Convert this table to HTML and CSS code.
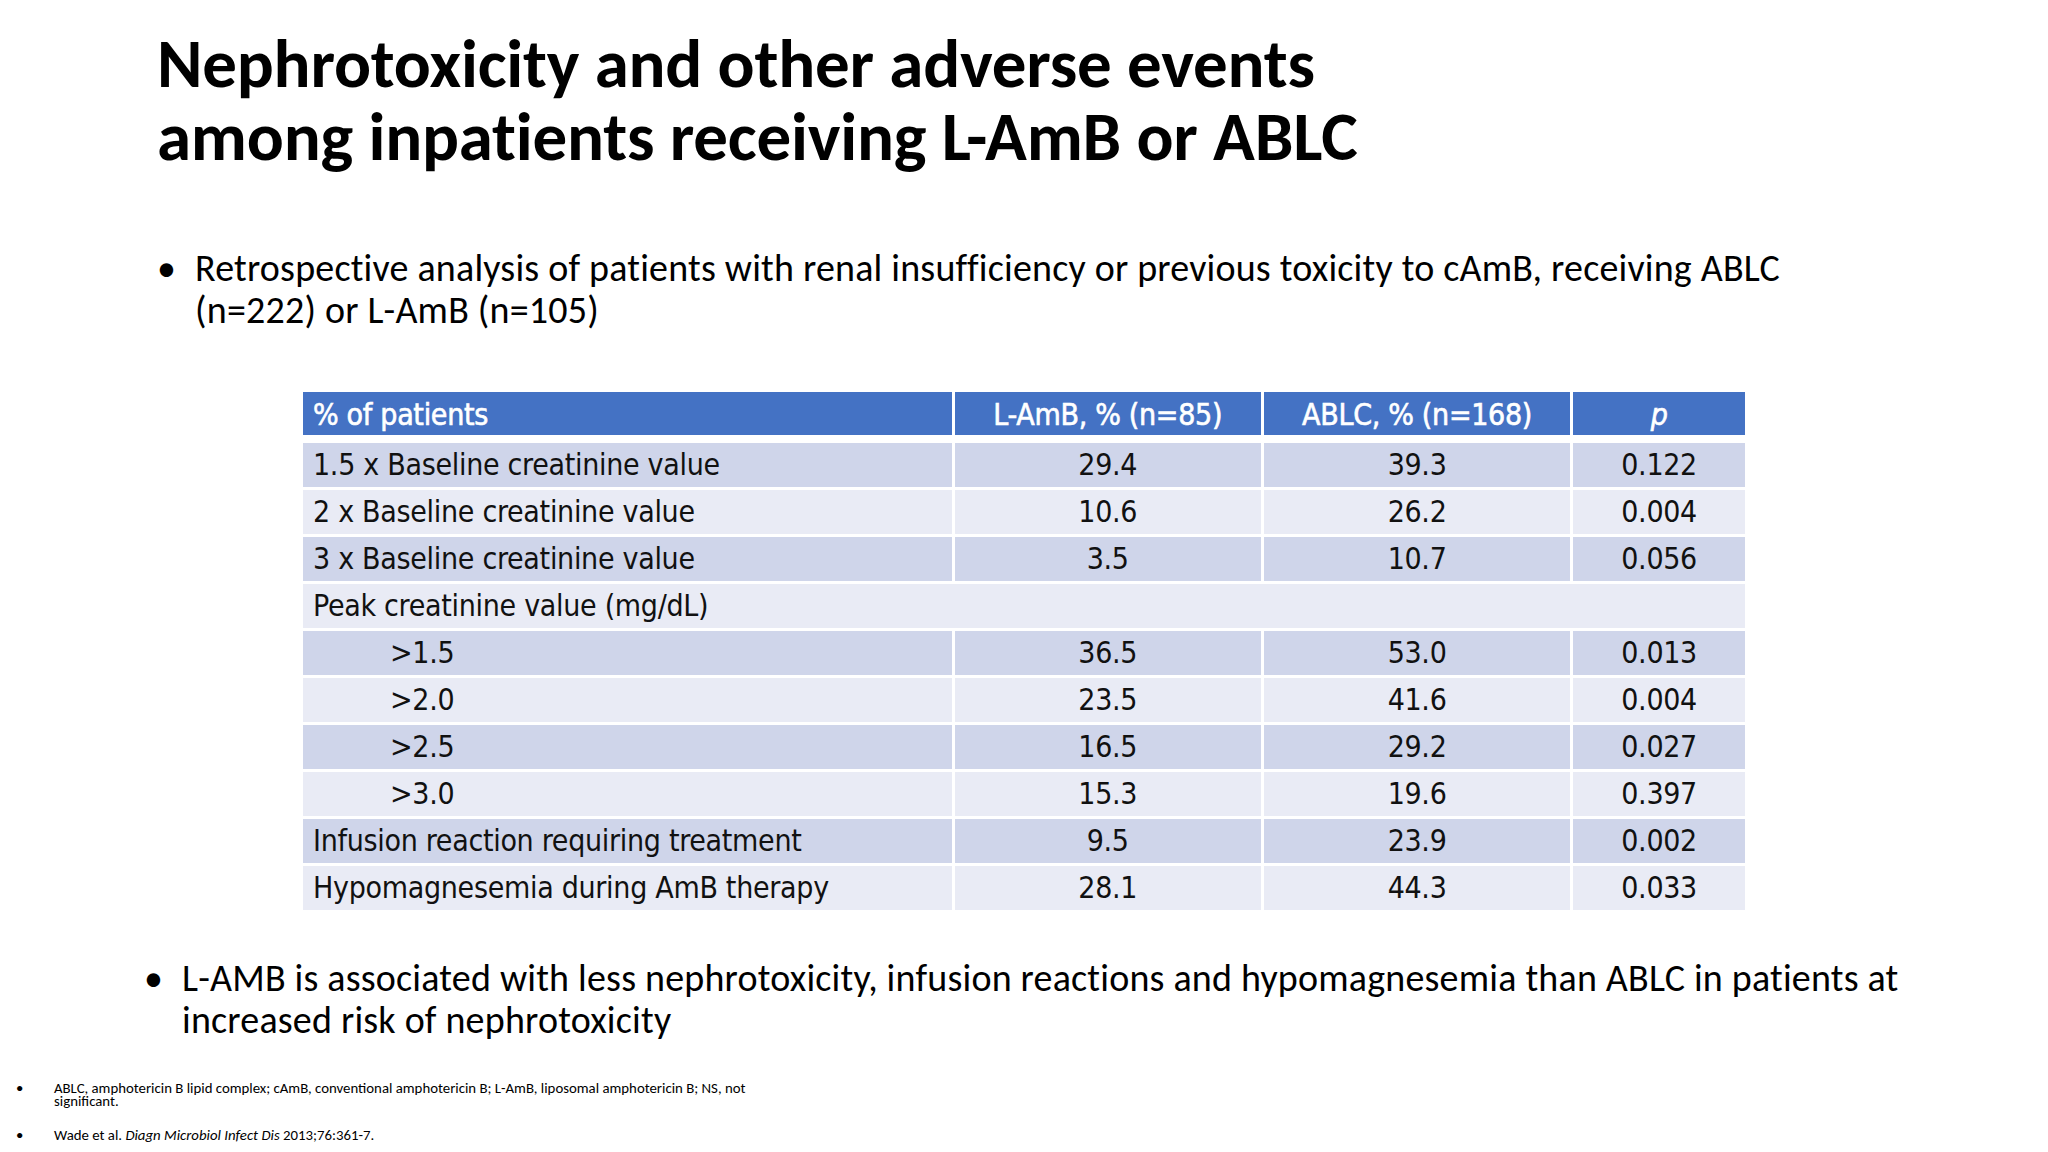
FILE: index.html
```html
<!DOCTYPE html>
<html>
<head>
<meta charset="utf-8">
<link rel="stylesheet" href="styles.css">
</head>
<body>
<div class="slide">
  <h1 class="title">Nephrotoxicity and other adverse events<br>among inpatients receiving L-AmB or ABLC</h1>
  <ul class="bullets top">
    <li>Retrospective analysis of patients with renal insufficiency or previous toxicity to cAmB, receiving ABLC (n=222) or L-AmB (n=105)</li>
  </ul>
  <table class="data">
    <colgroup>
      <col class="c1"><col class="c2"><col class="c3"><col class="c4">
    </colgroup>
    <thead>
      <tr><th class="lbl">% of patients</th><th>L-AmB, % (n=85)</th><th>ABLC, % (n=168)</th><th><i>p</i></th></tr>
    </thead>
    <tbody>
      <tr class="odd"><td class="lbl">1.5 x Baseline creatinine value</td><td>29.4</td><td>39.3</td><td>0.122</td></tr>
      <tr class="even"><td class="lbl">2 x Baseline creatinine value</td><td>10.6</td><td>26.2</td><td>0.004</td></tr>
      <tr class="odd"><td class="lbl">3 x Baseline creatinine value</td><td>3.5</td><td>10.7</td><td>0.056</td></tr>
      <tr class="even"><td class="lbl" colspan="4">Peak creatinine value (mg/dL)</td></tr>
      <tr class="odd"><td class="lbl ind">&gt;1.5</td><td>36.5</td><td>53.0</td><td>0.013</td></tr>
      <tr class="even"><td class="lbl ind">&gt;2.0</td><td>23.5</td><td>41.6</td><td>0.004</td></tr>
      <tr class="odd"><td class="lbl ind">&gt;2.5</td><td>16.5</td><td>29.2</td><td>0.027</td></tr>
      <tr class="even"><td class="lbl ind">&gt;3.0</td><td>15.3</td><td>19.6</td><td>0.397</td></tr>
      <tr class="odd"><td class="lbl">Infusion reaction requiring treatment</td><td>9.5</td><td>23.9</td><td>0.002</td></tr>
      <tr class="even"><td class="lbl">Hypomagnesemia during AmB therapy</td><td>28.1</td><td>44.3</td><td>0.033</td></tr>
    </tbody>
  </table>
  <ul class="bullets bottom">
    <li>L-AMB is associated with less nephrotoxicity, infusion reactions and hypomagnesemia than ABLC in patients at increased risk of nephrotoxicity</li>
  </ul>
  <ul class="notes">
    <li>ABLC, amphotericin B lipid complex; cAmB, conventional amphotericin B; L-AmB, liposomal amphotericin B; NS, not significant.</li>
    <li>Wade et al. <i>Diagn Microbiol Infect Dis</i> 2013;76:361-7.</li>
  </ul>
</div>
</body>
</html>
```
FILE: styles.css
```css
html, body {
  margin: 0;
  padding: 0;
  background: #ffffff;
}
.slide {
  width: 2048px;
  height: 1152px;
  box-sizing: border-box;
  position: relative;
  overflow: hidden;
  font-family: Carlito, Lato, "Open Sans", sans-serif;
  color: #000;
  padding-top: 27px;
}
.title {
  margin: 0 0 0 157px;
  font-size: 69px;
  line-height: 73px;
  font-weight: 700;
  letter-spacing: -0.2px;
}
.bullets {
  list-style: none;
  margin: 0;
  padding: 0;
}
.bullets li {
  position: relative;
  font-size: 38px;
  line-height: 42px;
  letter-spacing: 0.2px;
}
.bullets li::before {
  content: "\2022";
  position: absolute;
  left: -38px;
  top: 0;
}
.top {
  margin-top: 74px;
  margin-left: 195px;
  width: 1600px;
}
.data {
  margin-top: 58px;
  margin-left: 300px;
  width: 1448px;
  border-collapse: collapse;
  font-family: "DejaVu Sans Condensed", "DejaVu Sans", sans-serif;
  font-size: 30px;
  letter-spacing: -0.3px;
}
.data .c1 { width: 653px; }
.data .c2 { width: 310px; }
.data .c3 { width: 310px; }
.data .c4 { width: 175px; }
.data th, .data td {
  border: 3px solid #ffffff;
  height: 44px;
  padding: 0 10px;
  text-align: center;
  vertical-align: middle;
  font-weight: 400;
  line-height: 44px;
}
.data th {
  background: #4472c4;
  color: #ffffff;
  -webkit-text-stroke: 0.6px #ffffff;
  height: 40px;
  line-height: 40px;
  padding-top: 3px;
  border-bottom-width: 8px;
}
.data td { color: #111; }
.data .lbl { text-align: left; }
.data .ind { padding-left: 87px; }
.odd td { background: #cfd5ea; }
.even td { background: #e9ebf5; }
.bottom {
  margin-top: 44px;
  margin-left: 182px;
  width: 1800px;
}
.notes {
  list-style: none;
  margin: 41px 0 0 54px;
  padding: 0;
  width: 740px;
  font-size: 14.8px;
  line-height: 13px;
}
.notes li {
  position: relative;
  margin-bottom: 21px;
}
.notes li::before {
  content: "\2022";
  position: absolute;
  left: -38px;
}
```
